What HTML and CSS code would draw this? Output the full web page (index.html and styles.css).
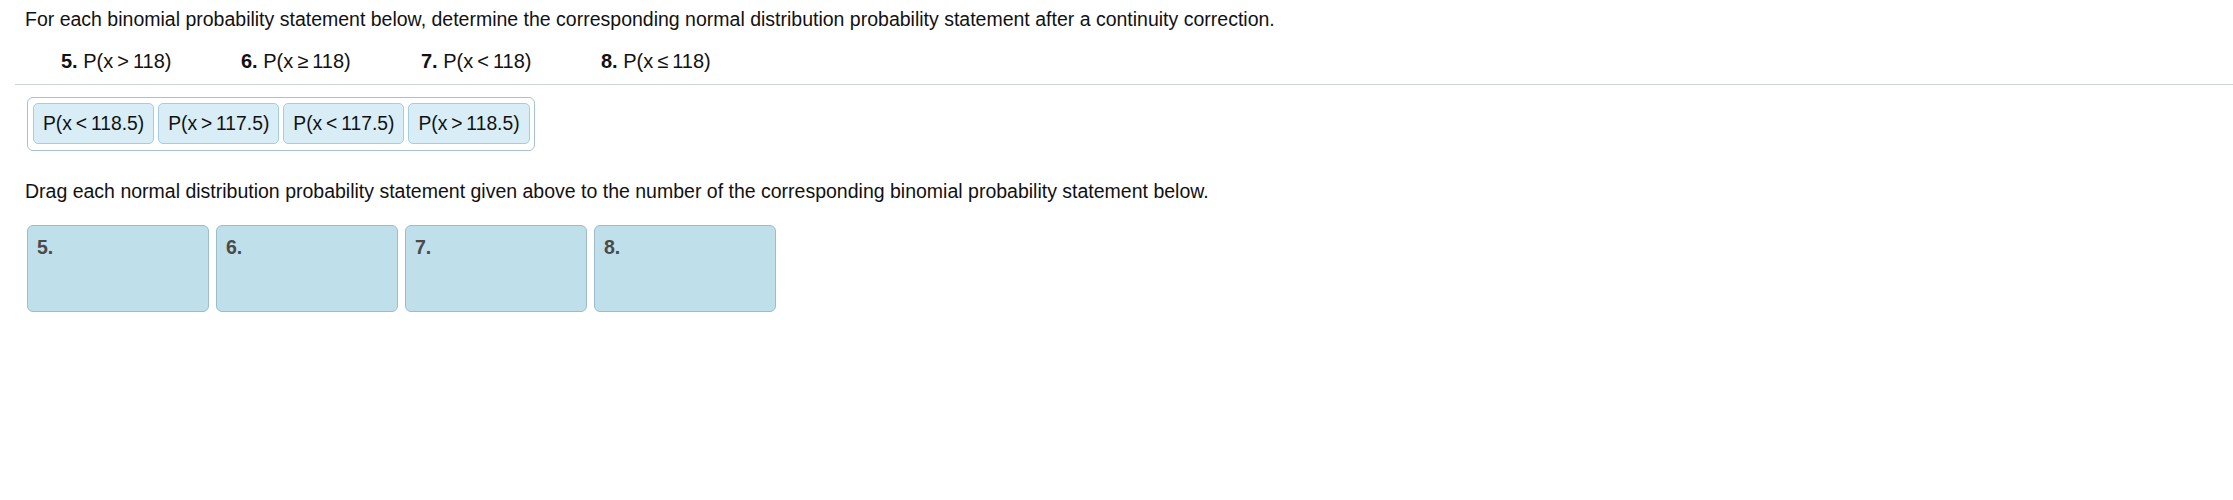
FILE: index.html
```html
<!DOCTYPE html>
<html>
<head>
<meta charset="utf-8">
<link rel="stylesheet" href="styles.css">
</head>
<body>
<div class="page">
  <p class="title">For each binomial probability statement below, determine the corresponding normal distribution probability statement after a continuity correction.</p>
  <div class="items">
    <div class="item"><b>5.</b> P(x&thinsp;&gt;&thinsp;118)</div>
    <div class="item"><b>6.</b> P(x&thinsp;&ge;&thinsp;118)</div>
    <div class="item"><b>7.</b> P(x&thinsp;&lt;&thinsp;118)</div>
    <div class="item"><b>8.</b> P(x&thinsp;&le;&thinsp;118)</div>
  </div>
  <div class="rule"></div>
  <div class="bank">
    <div class="tile">P(x&thinsp;&lt;&thinsp;118.5)</div>
    <div class="tile">P(x&thinsp;&gt;&thinsp;117.5)</div>
    <div class="tile">P(x&thinsp;&lt;&thinsp;117.5)</div>
    <div class="tile">P(x&thinsp;&gt;&thinsp;118.5)</div>
  </div>
  <p class="instr">Drag each normal distribution probability statement given above to the number of the corresponding binomial probability statement below.</p>
  <div class="targets">
    <div class="target"><span class="num">5.</span></div>
    <div class="target"><span class="num">6.</span></div>
    <div class="target"><span class="num">7.</span></div>
    <div class="target"><span class="num">8.</span></div>
  </div>
</div>
</body>
</html>
```
FILE: styles.css
```css
html, body {
  margin: 0;
  padding: 0;
  background: #ffffff;
}
.page {
  font-family: "Liberation Sans", Arial, sans-serif;
  font-size: 19.5px;
  line-height: 22px;
  color: #111111;
}
.title {
  margin: 0;
  padding: 8px 0 0 25px;
}
.items {
  display: flex;
  padding-left: 61px;
  margin-top: 20px;
}
.item {
  width: 180px;
  font-size: 20px;
}
.item b {
  font-weight: bold;
}
.rule {
  margin: 12px 0 0 15px;
  height: 1px;
  background: #cdd2dc;
}
.bank {
  display: inline-flex;
  gap: 4px;
  margin: 12px 0 0 27px;
  padding: 5px 4px 6px 5px;
  border: 1px solid #a7c2cf;
  border-radius: 6px;
}
.tile {
  height: 39px;
  display: flex;
  align-items: center;
  padding: 0 9px;
  background: #d9edf7;
  border: 1px solid #a4cde0;
  border-radius: 5px;
  color: #111111;
  font-size: 19.3px;
}
.instr {
  margin: 0;
  padding: 29px 0 0 25px;
}
.targets {
  display: flex;
  gap: 7px;
  margin: 23px 0 0 27px;
}
.target {
  width: 180px;
  height: 85px;
  background: #bfdfea;
  border: 1px solid #9cbccb;
  border-radius: 6px;
}
.num {
  display: block;
  padding: 10px 0 0 9px;
  font-weight: bold;
  color: #4a4a4a;
}
```
